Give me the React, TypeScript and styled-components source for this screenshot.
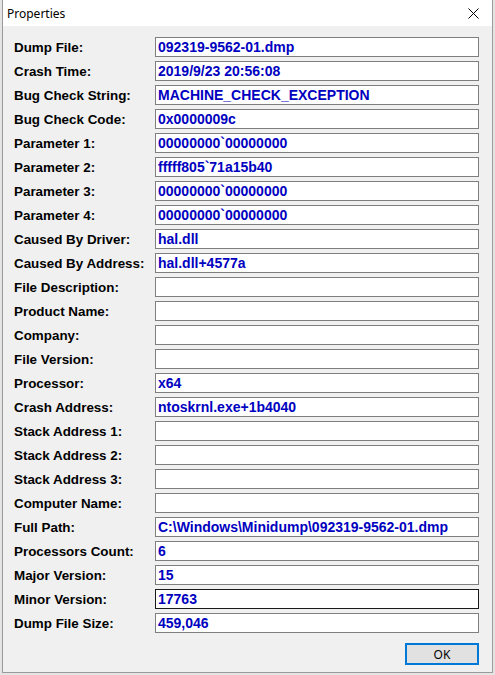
import React from 'react';
import styled, { createGlobalStyle } from 'styled-components';

const GlobalStyle = createGlobalStyle`
  html, body {
    margin: 0;
    padding: 0;
    background: #e4e4e4;
  }
  * {
    box-sizing: border-box;
  }
`;

const Window = styled.div`
  margin-left: 2px;
  width: 491px;
  height: 673px;
  display: flex;
  flex-direction: column;
  background: #f0f0f0;
  border: 1px solid #9a9a9a;
  border-top: none;
`;

const TitleBar = styled.div`
  height: 26px;
  flex: 0 0 26px;
  display: flex;
  align-items: center;
  justify-content: space-between;
  background: #ffffff;
  padding: 0 9px 0 4px;
  font-family: "Noto Sans", "Open Sans", sans-serif;
  font-size: 12px;
  color: #000;
`;

const CloseButton = styled.div`
  width: 20px;
  height: 20px;
  display: flex;
  align-items: center;
  justify-content: center;
`;

const Body = styled.div`
  flex: 1;
  padding: 11px 12px 7px 11px;
  display: flex;
  flex-direction: column;
`;

const FieldGrid = styled.div`
  display: grid;
  grid-template-columns: 141px 324px;
  grid-auto-rows: 20px;
  row-gap: 4px;
`;

const Label = styled.div`
  display: flex;
  align-items: center;
  font-family: "Liberation Sans", Arial, sans-serif;
  font-weight: bold;
  font-size: 13.4px;
  color: #000;
  white-space: nowrap;
`;

const ValueBox = styled.div<{ $focused?: boolean }>`
  display: flex;
  align-items: center;
  padding-left: 2px;
  background: #ffffff;
  border: 1px solid ${(p) => (p.$focused ? '#1a1a1a' : '#7f7f7f')};
  font-family: "Liberation Sans", Arial, sans-serif;
  font-weight: bold;
  font-size: 14px;
  color: #0000c0;
  white-space: nowrap;
  overflow: hidden;
`;

const Footer = styled.div`
  margin-top: 10px;
  display: flex;
  justify-content: flex-end;
  padding-right: 1px;
`;

const OkButton = styled.button`
  width: 74px;
  height: 22px;
  background: #e1e1e1;
  border: 2px solid #0078d7;
  font-family: "Noto Sans", "Open Sans", sans-serif;
  font-size: 12px;
  color: #000;
  padding: 0;
`;

const fields: [string, string][] = [
  ['Dump File:', '092319-9562-01.dmp'],
  ['Crash Time:', '2019/9/23 20:56:08'],
  ['Bug Check String:', 'MACHINE_CHECK_EXCEPTION'],
  ['Bug Check Code:', '0x0000009c'],
  ['Parameter 1:', '00000000`00000000'],
  ['Parameter 2:', 'fffff805`71a15b40'],
  ['Parameter 3:', '00000000`00000000'],
  ['Parameter 4:', '00000000`00000000'],
  ['Caused By Driver:', 'hal.dll'],
  ['Caused By Address:', 'hal.dll+4577a'],
  ['File Description:', ''],
  ['Product Name:', ''],
  ['Company:', ''],
  ['File Version:', ''],
  ['Processor:', 'x64'],
  ['Crash Address:', 'ntoskrnl.exe+1b4040'],
  ['Stack Address 1:', ''],
  ['Stack Address 2:', ''],
  ['Stack Address 3:', ''],
  ['Computer Name:', ''],
  ['Full Path:', 'C:\\Windows\\Minidump\\092319-9562-01.dmp'],
  ['Processors Count:', '6'],
  ['Major Version:', '15'],
  ['Minor Version:', '17763'],
  ['Dump File Size:', '459,046'],
];

export default function App() {
  return (
    <>
      <GlobalStyle />
      <Window>
        <TitleBar>
          <span>Properties</span>
          <CloseButton>
            <svg width="11" height="11" viewBox="0 0 11 11">
              <path d="M0.5 0.5 L10.5 10.5 M10.5 0.5 L0.5 10.5" stroke="#000" strokeWidth="1" fill="none" />
            </svg>
          </CloseButton>
        </TitleBar>
        <Body>
          <FieldGrid>
            {fields.map(([label, value]) => (
              <React.Fragment key={label}>
                <Label>{label}</Label>
                <ValueBox $focused={label === 'Minor Version:'}>{value}</ValueBox>
              </React.Fragment>
            ))}
          </FieldGrid>
          <Footer>
            <OkButton>OK</OkButton>
          </Footer>
        </Body>
      </Window>
    </>
  );
}
